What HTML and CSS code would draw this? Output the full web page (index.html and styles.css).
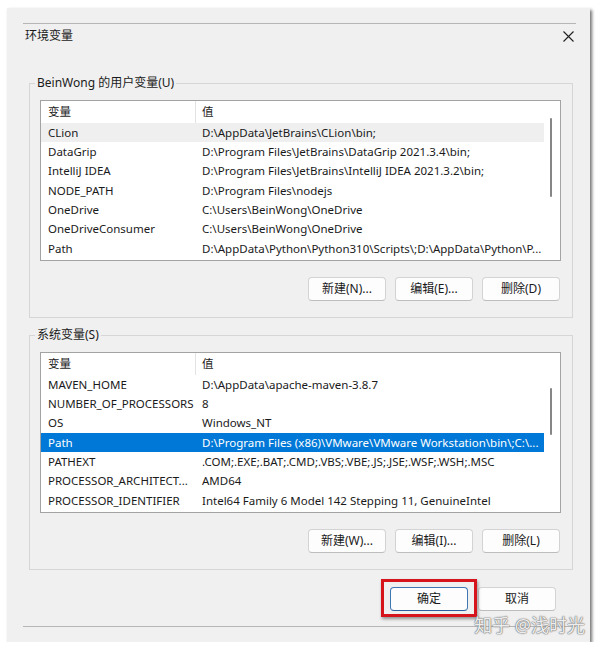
FILE: index.html
```html
<!DOCTYPE html>
<html lang="zh-CN">
<head>
<meta charset="utf-8">
<title>环境变量</title>
<link rel="stylesheet" href="styles.css">
</head>
<body>
<div class="window">
  <div class="frame">
    <div class="titlebar">
      <span class="title">环境变量</span>
      <svg class="close" width="11" height="11" viewBox="0 0 11 11"><path d="M0.5 0.5 L10.5 10.5 M10.5 0.5 L0.5 10.5" stroke="#1f1f1f" stroke-width="1.1" fill="none"/></svg>
    </div>

    <fieldset class="group">
      <legend>BeinWong 的用户变量(U)</legend>
      <div class="list">
        <div class="table">
          <div class="row head"><span class="c1">变量</span><span class="c2">值</span></div>
          <div class="row hover"><span class="c1">CLion</span><span class="c2">D:\AppData\JetBrains\CLion\bin;</span></div>
          <div class="row"><span class="c1">DataGrip</span><span class="c2">D:\Program Files\JetBrains\DataGrip 2021.3.4\bin;</span></div>
          <div class="row"><span class="c1">IntelliJ IDEA</span><span class="c2">D:\Program Files\JetBrains\IntelliJ IDEA 2021.3.2\bin;</span></div>
          <div class="row"><span class="c1">NODE_PATH</span><span class="c2">D:\Program Files\nodejs</span></div>
          <div class="row"><span class="c1">OneDrive</span><span class="c2">C:\Users\BeinWong\OneDrive</span></div>
          <div class="row"><span class="c1">OneDriveConsumer</span><span class="c2">C:\Users\BeinWong\OneDrive</span></div>
          <div class="row"><span class="c1">Path</span><span class="c2">D:\AppData\Python\Python310\Scripts\;D:\AppData\Python\P...</span></div>
        </div>
        <div class="scroll"><div class="thumb" style="margin-top:17px;height:79px"></div></div>
      </div>
      <div class="buttons">
        <button class="btn">新建(N)...</button>
        <button class="btn">编辑(E)...</button>
        <button class="btn">删除(D)</button>
      </div>
    </fieldset>

    <fieldset class="group group2">
      <legend>系统变量(S)</legend>
      <div class="list">
        <div class="table">
          <div class="row head"><span class="c1">变量</span><span class="c2">值</span></div>
          <div class="row"><span class="c1">MAVEN_HOME</span><span class="c2">D:\AppData\apache-maven-3.8.7</span></div>
          <div class="row"><span class="c1">NUMBER_OF_PROCESSORS</span><span class="c2">8</span></div>
          <div class="row"><span class="c1">OS</span><span class="c2">Windows_NT</span></div>
          <div class="row selected"><span class="c1">Path</span><span class="c2">D:\Program Files (x86)\VMware\VMware Workstation\bin\;C:\...</span></div>
          <div class="row"><span class="c1">PATHEXT</span><span class="c2">.COM;.EXE;.BAT;.CMD;.VBS;.VBE;.JS;.JSE;.WSF;.WSH;.MSC</span></div>
          <div class="row"><span class="c1">PROCESSOR_ARCHITECT...</span><span class="c2">AMD64</span></div>
          <div class="row"><span class="c1">PROCESSOR_IDENTIFIER</span><span class="c2">Intel64 Family 6 Model 142 Stepping 11, GenuineIntel</span></div>
        </div>
        <div class="scroll"><div class="thumb" style="margin-top:35px;height:47px"></div></div>
      </div>
      <div class="buttons">
        <button class="btn">新建(W)...</button>
        <button class="btn">编辑(I)...</button>
        <button class="btn">删除(L)</button>
      </div>
    </fieldset>

    <div class="footer">
      <button class="btn ok">确定</button>
      <button class="btn">取消</button>
    </div>
  </div>
  <div class="watermark">知乎 @浅时光</div>
</div>
</body>
</html>
```
FILE: styles.css
```css
* { box-sizing: border-box; }
html, body { margin: 0; background: #fff; }
body {
  font-family: "Noto Sans", "Noto Sans CJK SC", sans-serif;
  font-size: 12px;
  line-height: 16px;
  color: #1a1a1a;
}
.window {
  position: relative;
  margin: 8px 0 0 7px;
  width: 583px;
  height: 634px;
  padding: 15px 14px 0 16px;
  background: #f0f0f0;
  box-shadow: 2px 2px 3px rgba(0, 0, 0, 0.55);
}
.frame {
  height: 604px;
  border-top: 1px solid #b6b6b6;
  border-bottom: 1px solid #b6b6b6;
}
.titlebar {
  height: 24px;
  display: flex;
  align-items: center;
  justify-content: space-between;
  padding: 0 2px 0 2px;
}
.close { display: block; }

.group {
  margin: 27px 3px 0 6px;
  padding: 9px 11px 16px 10px;
  border: 1px solid #d6d6d6;
  min-width: 0;
}
.group2 { margin-top: 9px; }
.group legend {
  padding: 0 2px;
  margin-left: -5px;
  line-height: 16px;
}
.list {
  display: flex;
  height: 161px;
  border: 1px solid #a3a3a3;
  background: #fff;
  font-size: 11.5px;
}
.table { flex: 1; min-width: 0; }
.scroll { width: 16px; flex: none; }
.thumb {
  width: 2px;
  margin-left: 6px;
  background: #868686;
  border-radius: 1px;
}
.row {
  display: flex;
  height: 19.33px;
  align-items: center;
  white-space: nowrap;
}
.row.head { height: 22px; align-items: stretch; }
.c1 {
  width: 154px;
  flex: none;
  padding-left: 7px;
  overflow: hidden;
}
.c2 {
  flex: 1;
  min-width: 0;
  padding-left: 7px;
  overflow: hidden;
}
.head .c1, .head .c2 { display: flex; align-items: center; }
.head .c2 { border-left: 1px solid #e3e3e3; padding-left: 6px; }
.row.hover { background: #efefef; }
.row.selected { background: #0078d7; color: #fff; }

.buttons {
  display: flex;
  justify-content: flex-end;
  gap: 9px;
  margin-top: 16px;
  padding-right: 1px;
}
.btn {
  width: 78px;
  height: 24px;
  padding: 0;
  border: 1px solid #d3d3d3;
  border-bottom-color: #bdbdbd;
  border-radius: 4px;
  background: #fdfdfd;
  font: inherit;
  color: #1a1a1a;
  display: flex;
  align-items: center;
  justify-content: center;
}
.footer {
  display: flex;
  justify-content: flex-end;
  gap: 10px;
  margin-top: 17px;
  padding-right: 20px;
}
.ok {
  position: relative;
  border-color: #3f76b4;
  border-bottom-color: #2a5f9e;
}
.ok::after {
  content: "";
  position: absolute;
  left: -10px;
  right: -10px;
  top: -9px;
  bottom: -7px;
  border: 3px solid #d6141c;
  box-shadow: 1px 2px 3px rgba(0, 0, 0, 0.4);
}
.watermark {
  position: absolute;
  right: 5px;
  bottom: 6px;
  font-size: 18px;
  line-height: 22px;
  color: rgba(255, 255, 255, 0.9);
  text-shadow: 0 0 1px #6f6f6f, 0 0 1px #6f6f6f, 0 0 2px #999;
}
```
